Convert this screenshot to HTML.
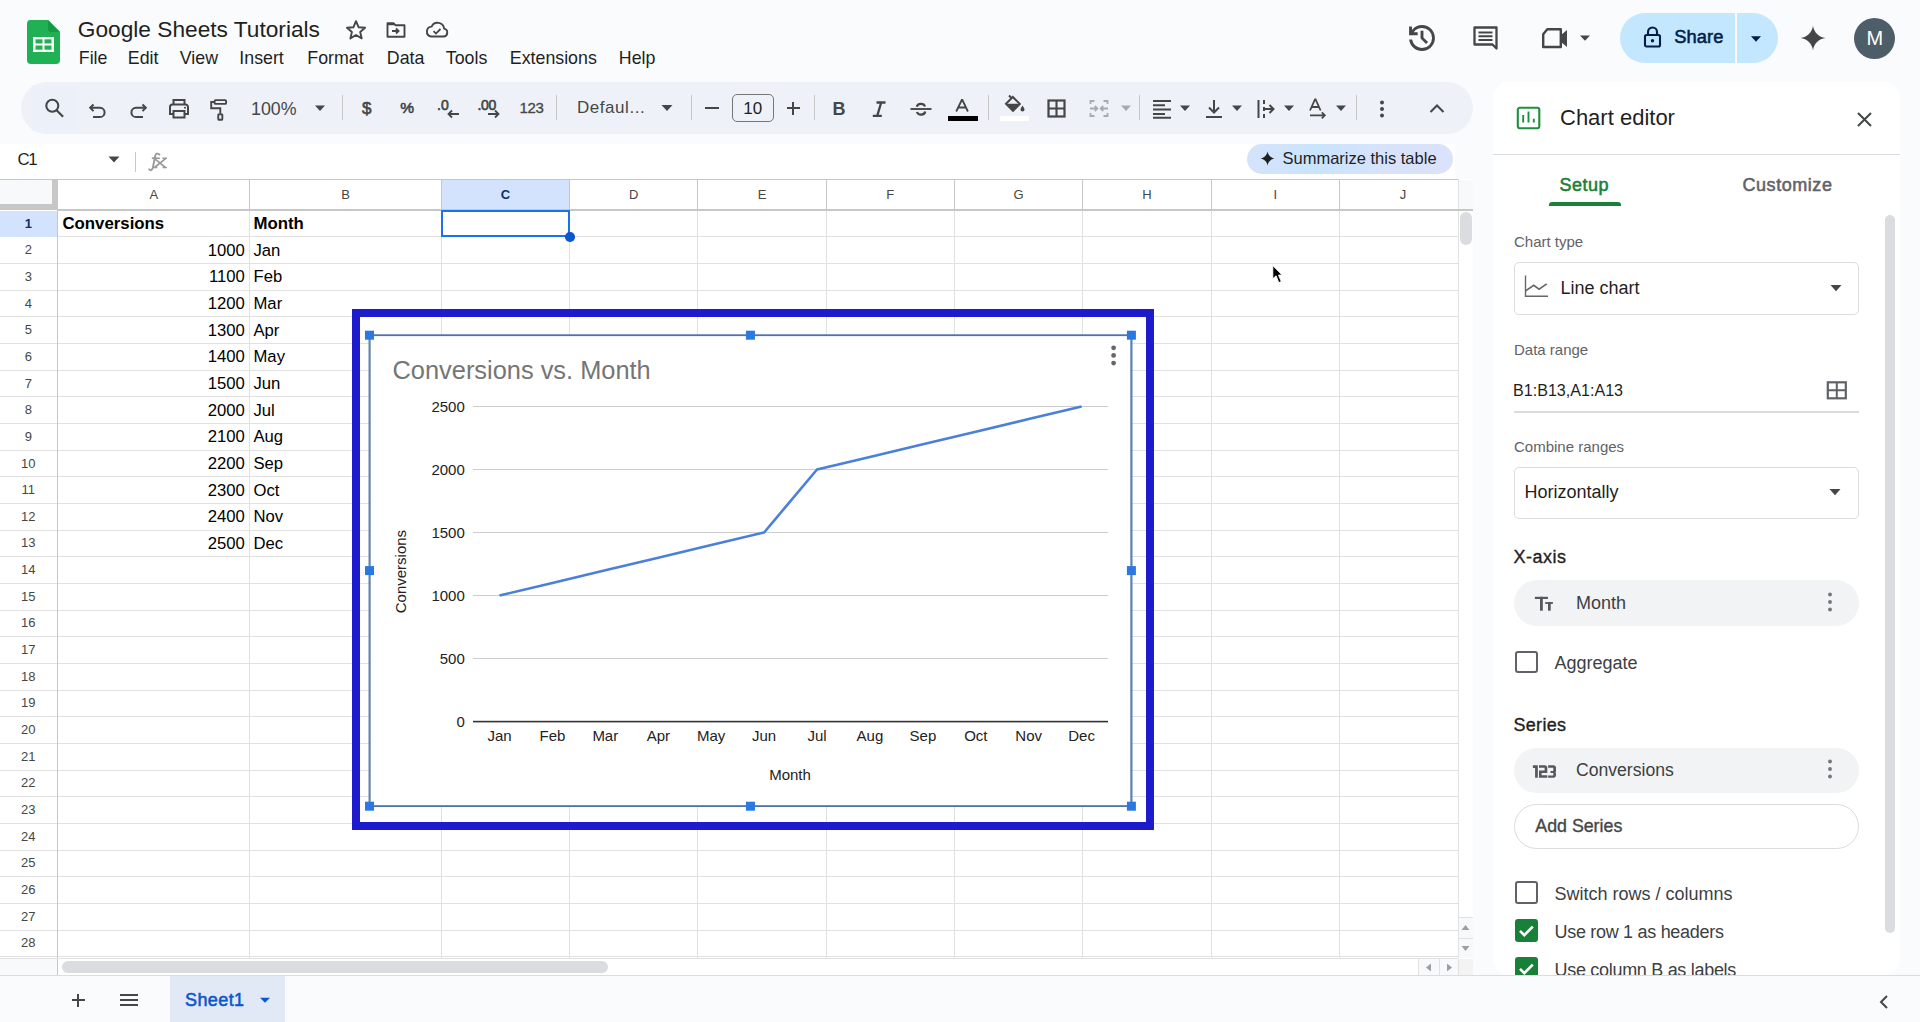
<!DOCTYPE html><html><head><meta charset="utf-8"><style>
html,body{margin:0;padding:0;}
body{width:1920px;height:1022px;overflow:hidden;position:relative;background:#f9fbfd;font-family:"Liberation Sans", sans-serif;}
.t{position:absolute;white-space:nowrap;line-height:1;}
.r{position:absolute;}
</style></head><body>
<svg class="r" style="left:27px;top:20px;" width="33" height="44" viewBox="0 0 33 44">
<path d="M3 0H21L33 12V40Q33 44 29 44H4Q0 44 0 40V4Q0 0 3 0Z" fill="#1fb153"/>
<path d="M21 0L33 12H24Q21 12 21 9Z" fill="#159a44"/>
<rect x="6" y="17" width="21" height="15" fill="#fff"/>
<rect x="8.5" y="19.3" width="7" height="4.2" fill="#1fb153"/>
<rect x="17.5" y="19.3" width="7" height="4.2" fill="#1fb153"/>
<rect x="8.5" y="25.5" width="7" height="4.2" fill="#1fb153"/>
<rect x="17.5" y="25.5" width="7" height="4.2" fill="#1fb153"/>
</svg>
<div class="t" style="left:77.80px;top:17.78px;font-size:22.7px;color:#1f1f1f;">Google Sheets Tutorials</div>
<svg class="r" style="left:344px;top:18px;" width="24" height="24" viewBox="0 0 24 24"><path d="M12 3.2l2.6 6 6.5.5-4.9 4.3 1.5 6.4L12 17l-5.6 3.4 1.5-6.4L3 9.7l6.5-.5z" fill="none" stroke="#444746" stroke-width="1.9" stroke-linejoin="round"/></svg>
<svg class="r" style="left:384px;top:18px;" width="24" height="24" viewBox="0 0 24 24"><path d="M3.5 5.2h6l2 2h9v11.6h-17z" fill="none" stroke="#444746" stroke-width="1.9" stroke-linejoin="round"/><path d="M3.5 5.2h6l2 2H3.5z" fill="#444746"/><path d="M8 13h6.5M12 10.5l2.6 2.5L12 15.5" fill="none" stroke="#444746" stroke-width="1.8"/></svg>
<svg class="r" style="left:424px;top:18px;" width="26" height="24" viewBox="0 0 26 24"><path d="M7 18.5h12.5a4 4 0 0 0 .6-7.9A6.6 6.6 0 0 0 7.6 8.6 5 5 0 0 0 7 18.5z" fill="none" stroke="#444746" stroke-width="1.9" stroke-linejoin="round"/><path d="M9.5 13.2l2.4 2.4 4.6-4.6" fill="none" stroke="#444746" stroke-width="1.8"/></svg>
<div class="t" style="left:78.80px;top:49.73px;font-size:17.8px;color:#1f1f1f;">File</div>
<div class="t" style="left:127.80px;top:49.73px;font-size:17.8px;color:#1f1f1f;">Edit</div>
<div class="t" style="left:179.80px;top:49.73px;font-size:17.8px;color:#1f1f1f;">View</div>
<div class="t" style="left:239.30px;top:49.73px;font-size:17.8px;color:#1f1f1f;">Insert</div>
<div class="t" style="left:307.30px;top:49.73px;font-size:17.8px;color:#1f1f1f;">Format</div>
<div class="t" style="left:386.80px;top:49.73px;font-size:17.8px;color:#1f1f1f;">Data</div>
<div class="t" style="left:445.80px;top:49.73px;font-size:17.8px;color:#1f1f1f;">Tools</div>
<div class="t" style="left:509.80px;top:49.73px;font-size:17.8px;color:#1f1f1f;">Extensions</div>
<div class="t" style="left:618.80px;top:49.73px;font-size:17.8px;color:#1f1f1f;">Help</div>
<svg class="r" style="left:1408px;top:24px;" width="28" height="28" viewBox="90 -870 780 780"><path d="M480-120q-138 0-240.5-91.5T122-440h82q14 104 92.5 172T480-200q117 0 198.5-81.5T760-480q0-117-81.5-198.5T480-760q-69 0-129 32t-101 88h110v80H120v-240h80v94q51-64 124.5-99T480-840q75 0 140.5 28.5t114 77q48.5 48.5 77 114T840-480q0 75-28.5 140.5t-77 114q-48.5 48.5-114 77T480-120Zm112-192L440-464v-216h80v184l128 128-56 56Z" fill="#444746"/></svg>
<svg class="r" style="left:1472px;top:25px;" width="28" height="27" viewBox="0 0 28 27"><path d="M2.5 2.5h22v21l-4-4h-18z" fill="none" stroke="#444746" stroke-width="2.3" stroke-linejoin="round"/><path d="M6.5 7.5h14M6.5 11.2h14M6.5 14.9h14" stroke="#444746" stroke-width="2"/></svg>
<svg class="r" style="left:1540px;top:27px;" width="30" height="24" viewBox="0 0 30 24"><path d="M7.3 2.2h13.5v17.8H3.2V7.2z" fill="none" stroke="#444746" stroke-width="2.4" stroke-linejoin="round"/><path d="M20.5 8.5l6.5-5.5v17l-6.5-5.5z" fill="#444746"/></svg>
<svg class="r" style="left:1579px;top:34px;" width="12" height="8" viewBox="0 0 12 8"><path d="M1 1.5h10L6 6.8z" fill="#444746"/></svg>
<div class="r" style="left:1620px;top:13px;width:158px;height:50px;background:#c2e7ff;border-radius:25px;"></div>
<div class="r" style="left:1735px;top:13px;width:2px;height:50px;background:#f9fbfd;"></div>
<svg class="r" style="left:1643px;top:26px;" width="19" height="22" viewBox="0 0 19 22"><rect x="2" y="9" width="15" height="11.5" rx="1.5" fill="none" stroke="#041e49" stroke-width="2.1"/><path d="M5 9V6a4.5 4.5 0 0 1 9 0v3" fill="none" stroke="#041e49" stroke-width="2.1"/><circle cx="9.5" cy="14.8" r="1.7" fill="#041e49"/></svg>
<div class="t" style="left:1674.30px;top:28.31px;font-size:18.3px;color:#041e49;letter-spacing:0.1px;-webkit-text-stroke-width:0.55px;">Share</div>
<svg class="r" style="left:1750px;top:35px;" width="12" height="8" viewBox="0 0 12 8"><path d="M1 1.2h10L6 6.8z" fill="#041e49"/></svg>
<svg class="r" style="left:1800px;top:25px;" width="26" height="26" viewBox="0 0 26 26"><path d="M13 0.5C13.6 7 19 12.4 25.5 13C19 13.6 13.6 19 13 25.5C12.4 19 7 13.6 0.5 13C7 12.4 12.4 7 13 0.5Z" fill="#444746"/></svg>
<div class="r" style="left:1854px;top:18px;width:41px;height:41px;background:#4e5e69;border-radius:50%;"></div>
<div class="t" style="left:1854.80px;width:40px;text-align:center;top:27.87px;font-size:20px;color:#ffffff;">M</div>
<div class="r" style="left:21px;top:82px;width:1452px;height:52px;background:#eef2f8;border-radius:26px;"></div>
<div class="r" style="left:31px;top:85px;width:47px;height:46px;background:#ebf0f9;border-radius:4px;"></div>
<svg class="r" style="left:43px;top:97px;" width="24" height="24" viewBox="0 0 24 24"><circle cx="9.3" cy="8.8" r="6" fill="none" stroke="#444746" stroke-width="2.1"/><path d="M13.6 13.2l6.5 6.5" stroke="#444746" stroke-width="2.2"/></svg>
<svg class="r" style="left:88px;top:100px;" width="20" height="20" viewBox="0 0 20 20"><path d="M5.5 4.5L2.2 7.8l3.3 3.3" fill="none" stroke="#444746" stroke-width="2"/><path d="M2.5 7.8h9.5a4.6 4.6 0 0 1 0 9.2H5" fill="none" stroke="#444746" stroke-width="2"/></svg>
<svg class="r" style="left:128px;top:100px;" width="20" height="20" viewBox="0 0 20 20"><path d="M14.5 4.5l3.3 3.3-3.3 3.3" fill="none" stroke="#444746" stroke-width="2"/><path d="M17.5 7.8H8a4.6 4.6 0 0 0 0 9.2h7" fill="none" stroke="#444746" stroke-width="2"/></svg>
<svg class="r" style="left:167px;top:98px;" width="24" height="22" viewBox="0 0 24 22"><path d="M6.5 6V2h11v4" fill="none" stroke="#444746" stroke-width="2"/><path d="M6 16H3V9a2.5 2.5 0 0 1 2.5-2.5h13A2.5 2.5 0 0 1 21 9v7h-3" fill="none" stroke="#444746" stroke-width="2"/><rect x="6.5" y="13" width="11" height="6.5" fill="none" stroke="#444746" stroke-width="2"/><circle cx="18" cy="9.8" r="1" fill="#444746"/></svg>
<svg class="r" style="left:208px;top:98px;" width="22" height="24" viewBox="0 0 22 24"><rect x="6.6" y="2.1" width="11.5" height="3.8" rx="1" fill="none" stroke="#444746" stroke-width="1.9"/><path d="M6.6 4H3.2V10.3H12.3V15.3" fill="none" stroke="#444746" stroke-width="1.9"/><rect x="10.25" y="16.2" width="4.1" height="5.6" rx=".9" fill="none" stroke="#444746" stroke-width="1.9"/></svg>
<div class="t" style="left:251.00px;top:100.83px;font-size:17.8px;color:#444746;">100%</div>
<svg class="r" style="left:314px;top:104px;" width="12" height="8" viewBox="0 0 12 8"><path d="M1 1.5h10L6 7z" fill="#444746"/></svg>
<div class="r" style="left:342px;top:95px;width:1px;height:25px;background:#c7c7c7;"></div>
<div class="t" style="left:362.00px;top:100.41px;font-size:17px;color:#444746;-webkit-text-stroke-width:0.6px;">$</div>
<div class="t" style="left:400.30px;top:100.18px;font-size:15.5px;color:#444746;-webkit-text-stroke-width:0.6px;">%</div>
<div class="t" style="left:437.00px;top:98.45px;font-size:14px;color:#444746;-webkit-text-stroke-width:0.6px;">.0</div>
<svg class="r" style="left:446px;top:109px;" width="14" height="10" viewBox="0 0 14 10"><path d="M13 5H2.5M6 1.5L2.5 5 6 8.5" fill="none" stroke="#444746" stroke-width="1.8"/></svg>
<div class="t" style="left:477.50px;top:98.45px;font-size:14px;color:#444746;letter-spacing:-0.4px;-webkit-text-stroke-width:0.6px;">.00</div>
<svg class="r" style="left:487px;top:109px;" width="14" height="10" viewBox="0 0 14 10"><path d="M1 5h10.5M8 1.5L11.5 5 8 8.5" fill="none" stroke="#444746" stroke-width="1.8"/></svg>
<div class="t" style="left:519.50px;top:100.20px;font-size:15px;color:#444746;letter-spacing:-0.4px;-webkit-text-stroke-width:0.3px;">123</div>
<div class="r" style="left:556px;top:95px;width:1px;height:25px;background:#c7c7c7;"></div>
<div class="t" style="left:577.00px;top:99.31px;font-size:17px;color:#444746;letter-spacing:0.55px;">Defaul...</div>
<svg class="r" style="left:660px;top:103px;" width="14" height="9" viewBox="0 0 14 9"><path d="M1.5 2h11L7 8z" fill="#444746"/></svg>
<div class="r" style="left:691px;top:95px;width:1px;height:25px;background:#c7c7c7;"></div>
<div class="r" style="left:705px;top:107px;width:13.5px;height:1.8px;background:#444746;"></div>
<div class="r" style="left:731.5px;top:93.5px;width:42.5px;height:28.5px;background:transparent;border:1.3px solid #747775;border-radius:5px;box-sizing:border-box;"></div>
<div class="t" style="left:732.70px;width:40px;text-align:center;top:99.61px;font-size:17px;color:#1f1f1f;">10</div>
<div class="r" style="left:786.5px;top:107.3px;width:13px;height:1.9px;background:#444746;"></div>
<div class="r" style="left:792.2px;top:101.8px;width:1.9px;height:13px;background:#444746;"></div>
<div class="r" style="left:814px;top:95px;width:1px;height:25px;background:#c7c7c7;"></div>
<div class="t" style="left:832.50px;top:100.16px;font-size:18px;color:#444746;font-weight:bold;">B</div>
<svg class="r" style="left:870px;top:100px;" width="18" height="18" viewBox="0 0 18 18"><path d="M6.5 2.5h9M2.8 15.8h9M11.2 2.5L7.2 15.8" fill="none" stroke="#444746" stroke-width="2.3"/></svg>
<svg class="r" style="left:909px;top:100px;" width="24" height="18" viewBox="0 0 24 18"><path d="M1.5 9h21" stroke="#444746" stroke-width="1.9"/><path d="M16 6.5a4.2 3.6 0 0 0-8.2 .3M8 12a4.2 3.6 0 0 0 8.2 -.5" fill="none" stroke="#444746" stroke-width="2.2"/></svg>
<svg class="r" style="left:955px;top:99px;" width="14" height="13" viewBox="0 0 14 13"><path d="M1.2 12.5L6.8 1h.6l5.5 11.5M3.5 8.5h7" fill="none" stroke="#444746" stroke-width="1.8"/></svg>
<div class="r" style="left:948px;top:115.5px;width:29.5px;height:5px;background:#000000;"></div>
<div class="r" style="left:988px;top:95px;width:1px;height:25px;background:#c7c7c7;"></div>
<svg class="r" style="left:1003px;top:94px;" width="22" height="19" viewBox="0 0 22 19"><path d="M6 1.5l2 2M3 9.8L9.8 3l7 7-6.8 6.8z" fill="none" stroke="#444746" stroke-width="2"/><path d="M3 9.8h13.8L10 16.8z" fill="#444746"/><path d="M19.5 11.5q2 2.8 2 4a2 2 0 0 1-4 0q0-1.2 2-4z" fill="#444746"/></svg>
<div class="r" style="left:1000px;top:115.5px;width:29px;height:5px;background:#ffffff;"></div>
<svg class="r" style="left:1046px;top:98px;" width="22" height="22" viewBox="0 0 22 22"><rect x="2.5" y="2.5" width="16" height="16" fill="none" stroke="#444746" stroke-width="2.2"/><path d="M10.5 2.5v16M2.5 10.5h16" stroke="#444746" stroke-width="2.1"/></svg>
<svg class="r" style="left:1088px;top:98px;" width="24" height="22" viewBox="0 0 24 22"><path d="M2.5 6V3h4M2.5 15v3h4M19.5 6V3h-4M19.5 15v3h-4M2 10.5h7M6.8 8l2.5 2.5-2.5 2.5M20 10.5h-7M15.2 8l-2.5 2.5 2.5 2.5" fill="none" stroke="#a8abad" stroke-width="1.8"/></svg>
<svg class="r" style="left:1120px;top:104px;" width="12" height="8" viewBox="0 0 12 8"><path d="M1 1.5h10L6 7z" fill="#a8abad"/></svg>
<div class="r" style="left:1139px;top:95px;width:1px;height:25px;background:#c7c7c7;"></div>
<svg class="r" style="left:1151px;top:98px;" width="22" height="22" viewBox="0 0 22 22"><path d="M2 3h18M2 7.3h12M2 11.6h18M2 15.9h12M2 19.8h18" stroke="#444746" stroke-width="2"/></svg>
<svg class="r" style="left:1179px;top:104px;" width="12" height="8" viewBox="0 0 12 8"><path d="M1 1.5h10L6 7z" fill="#444746"/></svg>
<svg class="r" style="left:1204px;top:98px;" width="20" height="22" viewBox="0 0 20 22"><path d="M10 2v12M5 9.5l5 5 5-5" fill="none" stroke="#444746" stroke-width="2"/><path d="M2 19h16" stroke="#444746" stroke-width="2"/></svg>
<svg class="r" style="left:1231px;top:104px;" width="12" height="8" viewBox="0 0 12 8"><path d="M1 1.5h10L6 7z" fill="#444746"/></svg>
<svg class="r" style="left:1256px;top:98px;" width="20" height="22" viewBox="0 0 20 22"><path d="M2.5 2v18M8 2v4M8 9v4M8 16v4M8 11h9.5M13.5 7l4 4-4 4" fill="none" stroke="#444746" stroke-width="2"/></svg>
<svg class="r" style="left:1283px;top:104px;" width="12" height="8" viewBox="0 0 12 8"><path d="M1 1.5h10L6 7z" fill="#444746"/></svg>
<svg class="r" style="left:1308px;top:98px;" width="22" height="22" viewBox="0 0 22 22"><path d="M2 12.5L7 1.5h.6l5 11M3.6 9h7.8" fill="none" stroke="#444746" stroke-width="1.8"/><path d="M2 17.3h14.5M13.8 14.3l3 3-3 3" fill="none" stroke="#444746" stroke-width="1.8"/></svg>
<svg class="r" style="left:1335px;top:104px;" width="12" height="8" viewBox="0 0 12 8"><path d="M1 1.5h10L6 7z" fill="#444746"/></svg>
<div class="r" style="left:1356px;top:95px;width:1px;height:25px;background:#c7c7c7;"></div>
<svg class="r" style="left:1376px;top:99px;" width="12" height="20" viewBox="0 0 12 20"><circle cx="6" cy="3.5" r="2" fill="#444746"/><circle cx="6" cy="10" r="2" fill="#444746"/><circle cx="6" cy="16.5" r="2" fill="#444746"/></svg>
<svg class="r" style="left:1428px;top:101px;" width="18" height="14" viewBox="0 0 18 14"><path d="M2.5 11l6.5-6.5 6.5 6.5" fill="none" stroke="#444746" stroke-width="2.1"/></svg>
<div class="r" style="left:0px;top:143.5px;width:1455px;height:36px;background:#ffffff;"></div>
<div class="t" style="left:17.50px;top:152.08px;font-size:16.8px;color:#1f1f1f;letter-spacing:-1.3px;">C1</div>
<svg class="r" style="left:107px;top:155px;" width="14" height="9" viewBox="0 0 14 9"><path d="M1.5 1.5h11L7 7.5z" fill="#444746"/></svg>
<div class="r" style="left:135px;top:152px;width:1px;height:20px;background:#c7c7c7;"></div>
<svg class="r" style="left:145px;top:150px;" width="26" height="24" viewBox="0 0 26 24"><path d="M4.2 19.2Q6.2 22 7.9 17.5L10.2 5.8Q11.2 2.2 14.4 4.6" fill="none" stroke="#9a9a9a" stroke-width="1.9" stroke-linecap="round"/><path d="M6.8 8.3H15" stroke="#9a9a9a" stroke-width="1.5"/><path d="M9.5 8.6L20.5 17.5M20.5 8.6L9.5 17.5" stroke="#9a9a9a" stroke-width="1.7"/><path d="M7.3 8.3H12.3M17.5 8.3H22M7.3 17.6H12.3M17.5 17.6H22" stroke="#9a9a9a" stroke-width="1.4"/></svg>
<div class="r" style="left:1247px;top:144px;width:206px;height:30px;background:linear-gradient(90deg,#d5e3fc 0%,#c9e4fd 35%,#d9e2fb 70%,#dbe2fb 100%);border-radius:15px;"></div>
<svg class="r" style="left:1260px;top:151px;" width="15" height="15" viewBox="0 0 15 15"><path d="M7.5 0.3C7.8 4 11 7.2 14.7 7.5C11 7.8 7.8 11 7.5 14.7C7.2 11 4 7.8 0.3 7.5C4 7.2 7.2 4 7.5 0.3Z" fill="#1f1f1f"/></svg>
<div class="t" style="left:1282.50px;top:150.03px;font-size:16.5px;color:#1f1f1f;">Summarize this table</div>
<div class="r" style="left:0px;top:179px;width:1473px;height:780px;background:#ffffff;"></div>
<svg class="r" style="left:0px;top:0px;" width="1473" height="975" viewBox="0 0 1473 975"><rect x="0" y="236" width="1458" height="1" fill="#e1e1e1"/><rect x="0" y="263" width="1458" height="1" fill="#e1e1e1"/><rect x="0" y="290" width="1458" height="1" fill="#e1e1e1"/><rect x="0" y="316" width="1458" height="1" fill="#e1e1e1"/><rect x="0" y="343" width="1458" height="1" fill="#e1e1e1"/><rect x="0" y="370" width="1458" height="1" fill="#e1e1e1"/><rect x="0" y="396" width="1458" height="1" fill="#e1e1e1"/><rect x="0" y="423" width="1458" height="1" fill="#e1e1e1"/><rect x="0" y="450" width="1458" height="1" fill="#e1e1e1"/><rect x="0" y="476" width="1458" height="1" fill="#e1e1e1"/><rect x="0" y="503" width="1458" height="1" fill="#e1e1e1"/><rect x="0" y="530" width="1458" height="1" fill="#e1e1e1"/><rect x="0" y="556" width="1458" height="1" fill="#e1e1e1"/><rect x="0" y="583" width="1458" height="1" fill="#e1e1e1"/><rect x="0" y="610" width="1458" height="1" fill="#e1e1e1"/><rect x="0" y="636" width="1458" height="1" fill="#e1e1e1"/><rect x="0" y="663" width="1458" height="1" fill="#e1e1e1"/><rect x="0" y="690" width="1458" height="1" fill="#e1e1e1"/><rect x="0" y="716" width="1458" height="1" fill="#e1e1e1"/><rect x="0" y="743" width="1458" height="1" fill="#e1e1e1"/><rect x="0" y="770" width="1458" height="1" fill="#e1e1e1"/><rect x="0" y="796" width="1458" height="1" fill="#e1e1e1"/><rect x="0" y="823" width="1458" height="1" fill="#e1e1e1"/><rect x="0" y="850" width="1458" height="1" fill="#e1e1e1"/><rect x="0" y="876" width="1458" height="1" fill="#e1e1e1"/><rect x="0" y="903" width="1458" height="1" fill="#e1e1e1"/><rect x="0" y="930" width="1458" height="1" fill="#e1e1e1"/><rect x="0" y="956" width="1458" height="1" fill="#e1e1e1"/><rect x="249" y="179" width="1" height="780" fill="#e1e1e1"/><rect x="441" y="179" width="1" height="780" fill="#e1e1e1"/><rect x="569" y="179" width="1" height="780" fill="#e1e1e1"/><rect x="697" y="179" width="1" height="780" fill="#e1e1e1"/><rect x="826" y="179" width="1" height="780" fill="#e1e1e1"/><rect x="954" y="179" width="1" height="780" fill="#e1e1e1"/><rect x="1082" y="179" width="1" height="780" fill="#e1e1e1"/><rect x="1211" y="179" width="1" height="780" fill="#e1e1e1"/><rect x="1339" y="179" width="1" height="780" fill="#e1e1e1"/><rect x="1467" y="179" width="1" height="780" fill="#e1e1e1"/></svg>
<div class="r" style="left:0px;top:179px;width:1473px;height:1px;background:#c7c7c7;"></div>
<div class="r" style="left:58px;top:209px;width:1415px;height:2px;background:#c7c7c7;"></div>
<div class="r" style="left:249px;top:179px;width:1px;height:31px;background:#c7c7c7;"></div>
<div class="r" style="left:441px;top:179px;width:1px;height:31px;background:#c7c7c7;"></div>
<div class="r" style="left:569px;top:179px;width:1px;height:31px;background:#c7c7c7;"></div>
<div class="r" style="left:697px;top:179px;width:1px;height:31px;background:#c7c7c7;"></div>
<div class="r" style="left:826px;top:179px;width:1px;height:31px;background:#c7c7c7;"></div>
<div class="r" style="left:954px;top:179px;width:1px;height:31px;background:#c7c7c7;"></div>
<div class="r" style="left:1082px;top:179px;width:1px;height:31px;background:#c7c7c7;"></div>
<div class="r" style="left:1211px;top:179px;width:1px;height:31px;background:#c7c7c7;"></div>
<div class="r" style="left:1339px;top:179px;width:1px;height:31px;background:#c7c7c7;"></div>
<div class="r" style="left:1467px;top:179px;width:1px;height:31px;background:#c7c7c7;"></div>
<div class="r" style="left:57px;top:210px;width:1px;height:749px;background:#c7c7c7;"></div>
<div class="r" style="left:442px;top:180px;width:127px;height:29px;background:#d3e3fd;"></div>
<div class="r" style="left:0px;top:211px;width:57px;height:25.5px;background:#d3e3fd;"></div>
<div class="r" style="left:0px;top:180px;width:52px;height:24px;background:#f8f9fa;"></div>
<div class="r" style="left:52px;top:179px;width:6px;height:31px;background:#c7c7c7;"></div>
<div class="r" style="left:0px;top:204px;width:58px;height:6px;background:#c7c7c7;"></div>
<div class="t" style="left:123.85px;width:60px;text-align:center;top:187.80px;font-size:13px;color:#444746;">A</div>
<div class="t" style="left:315.50px;width:60px;text-align:center;top:187.80px;font-size:13px;color:#444746;">B</div>
<div class="t" style="left:475.45px;width:60px;text-align:center;top:187.80px;font-size:13px;color:#0f2f66;font-weight:bold;">C</div>
<div class="t" style="left:603.75px;width:60px;text-align:center;top:187.80px;font-size:13px;color:#444746;">D</div>
<div class="t" style="left:732.05px;width:60px;text-align:center;top:187.80px;font-size:13px;color:#444746;">E</div>
<div class="t" style="left:860.35px;width:60px;text-align:center;top:187.80px;font-size:13px;color:#444746;">F</div>
<div class="t" style="left:988.65px;width:60px;text-align:center;top:187.80px;font-size:13px;color:#444746;">G</div>
<div class="t" style="left:1116.95px;width:60px;text-align:center;top:187.80px;font-size:13px;color:#444746;">H</div>
<div class="t" style="left:1245.25px;width:60px;text-align:center;top:187.80px;font-size:13px;color:#444746;">I</div>
<div class="t" style="left:1373.00px;width:60px;text-align:center;top:187.80px;font-size:13px;color:#444746;">J</div>
<div class="t" style="left:3.30px;width:50px;text-align:center;top:216.56px;font-size:13px;color:#0f2f66;font-weight:bold;">1</div>
<div class="t" style="left:3.30px;width:50px;text-align:center;top:243.22px;font-size:13px;color:#444746;">2</div>
<div class="t" style="left:3.30px;width:50px;text-align:center;top:269.88px;font-size:13px;color:#444746;">3</div>
<div class="t" style="left:3.30px;width:50px;text-align:center;top:296.54px;font-size:13px;color:#444746;">4</div>
<div class="t" style="left:3.30px;width:50px;text-align:center;top:323.20px;font-size:13px;color:#444746;">5</div>
<div class="t" style="left:3.30px;width:50px;text-align:center;top:349.86px;font-size:13px;color:#444746;">6</div>
<div class="t" style="left:3.30px;width:50px;text-align:center;top:376.52px;font-size:13px;color:#444746;">7</div>
<div class="t" style="left:3.30px;width:50px;text-align:center;top:403.18px;font-size:13px;color:#444746;">8</div>
<div class="t" style="left:3.30px;width:50px;text-align:center;top:429.84px;font-size:13px;color:#444746;">9</div>
<div class="t" style="left:3.30px;width:50px;text-align:center;top:456.50px;font-size:13px;color:#444746;">10</div>
<div class="t" style="left:3.30px;width:50px;text-align:center;top:483.16px;font-size:13px;color:#444746;">11</div>
<div class="t" style="left:3.30px;width:50px;text-align:center;top:509.82px;font-size:13px;color:#444746;">12</div>
<div class="t" style="left:3.30px;width:50px;text-align:center;top:536.48px;font-size:13px;color:#444746;">13</div>
<div class="t" style="left:3.30px;width:50px;text-align:center;top:563.14px;font-size:13px;color:#444746;">14</div>
<div class="t" style="left:3.30px;width:50px;text-align:center;top:589.80px;font-size:13px;color:#444746;">15</div>
<div class="t" style="left:3.30px;width:50px;text-align:center;top:616.46px;font-size:13px;color:#444746;">16</div>
<div class="t" style="left:3.30px;width:50px;text-align:center;top:643.12px;font-size:13px;color:#444746;">17</div>
<div class="t" style="left:3.30px;width:50px;text-align:center;top:669.78px;font-size:13px;color:#444746;">18</div>
<div class="t" style="left:3.30px;width:50px;text-align:center;top:696.44px;font-size:13px;color:#444746;">19</div>
<div class="t" style="left:3.30px;width:50px;text-align:center;top:723.10px;font-size:13px;color:#444746;">20</div>
<div class="t" style="left:3.30px;width:50px;text-align:center;top:749.76px;font-size:13px;color:#444746;">21</div>
<div class="t" style="left:3.30px;width:50px;text-align:center;top:776.42px;font-size:13px;color:#444746;">22</div>
<div class="t" style="left:3.30px;width:50px;text-align:center;top:803.08px;font-size:13px;color:#444746;">23</div>
<div class="t" style="left:3.30px;width:50px;text-align:center;top:829.74px;font-size:13px;color:#444746;">24</div>
<div class="t" style="left:3.30px;width:50px;text-align:center;top:856.40px;font-size:13px;color:#444746;">25</div>
<div class="t" style="left:3.30px;width:50px;text-align:center;top:883.06px;font-size:13px;color:#444746;">26</div>
<div class="t" style="left:3.30px;width:50px;text-align:center;top:909.72px;font-size:13px;color:#444746;">27</div>
<div class="t" style="left:3.30px;width:50px;text-align:center;top:936.38px;font-size:13px;color:#444746;">28</div>
<div class="t" style="left:62.50px;top:216.28px;font-size:16.8px;color:#000000;font-weight:bold;">Conversions</div>
<div class="t" style="left:253.50px;top:216.28px;font-size:16.8px;color:#000000;font-weight:bold;">Month</div>
<div class="t" style="left:124.80px;width:120px;text-align:right;top:242.61px;font-size:16.67px;color:#000000;">1000</div>
<div class="t" style="left:253.50px;top:242.61px;font-size:16.67px;color:#000000;">Jan</div>
<div class="t" style="left:124.80px;width:120px;text-align:right;top:269.27px;font-size:16.67px;color:#000000;">1100</div>
<div class="t" style="left:253.50px;top:269.27px;font-size:16.67px;color:#000000;">Feb</div>
<div class="t" style="left:124.80px;width:120px;text-align:right;top:295.93px;font-size:16.67px;color:#000000;">1200</div>
<div class="t" style="left:253.50px;top:295.93px;font-size:16.67px;color:#000000;">Mar</div>
<div class="t" style="left:124.80px;width:120px;text-align:right;top:322.59px;font-size:16.67px;color:#000000;">1300</div>
<div class="t" style="left:253.50px;top:322.59px;font-size:16.67px;color:#000000;">Apr</div>
<div class="t" style="left:124.80px;width:120px;text-align:right;top:349.25px;font-size:16.67px;color:#000000;">1400</div>
<div class="t" style="left:253.50px;top:349.25px;font-size:16.67px;color:#000000;">May</div>
<div class="t" style="left:124.80px;width:120px;text-align:right;top:375.91px;font-size:16.67px;color:#000000;">1500</div>
<div class="t" style="left:253.50px;top:375.91px;font-size:16.67px;color:#000000;">Jun</div>
<div class="t" style="left:124.80px;width:120px;text-align:right;top:402.57px;font-size:16.67px;color:#000000;">2000</div>
<div class="t" style="left:253.50px;top:402.57px;font-size:16.67px;color:#000000;">Jul</div>
<div class="t" style="left:124.80px;width:120px;text-align:right;top:429.23px;font-size:16.67px;color:#000000;">2100</div>
<div class="t" style="left:253.50px;top:429.23px;font-size:16.67px;color:#000000;">Aug</div>
<div class="t" style="left:124.80px;width:120px;text-align:right;top:455.89px;font-size:16.67px;color:#000000;">2200</div>
<div class="t" style="left:253.50px;top:455.89px;font-size:16.67px;color:#000000;">Sep</div>
<div class="t" style="left:124.80px;width:120px;text-align:right;top:482.55px;font-size:16.67px;color:#000000;">2300</div>
<div class="t" style="left:253.50px;top:482.55px;font-size:16.67px;color:#000000;">Oct</div>
<div class="t" style="left:124.80px;width:120px;text-align:right;top:509.21px;font-size:16.67px;color:#000000;">2400</div>
<div class="t" style="left:253.50px;top:509.21px;font-size:16.67px;color:#000000;">Nov</div>
<div class="t" style="left:124.80px;width:120px;text-align:right;top:535.87px;font-size:16.67px;color:#000000;">2500</div>
<div class="t" style="left:253.50px;top:535.87px;font-size:16.67px;color:#000000;">Dec</div>
<div class="r" style="left:441px;top:210px;width:129px;height:27px;background:transparent;border:2px solid #1a73e8;box-sizing:border-box;"></div>
<div class="r" style="left:565.3px;top:232.2px;width:9.6px;height:9.6px;background:#0b57d0;border-radius:50%;"></div>
<div class="r" style="left:1458px;top:179px;width:15px;height:780px;background:#ffffff;"></div>
<div class="r" style="left:1458px;top:179px;width:1px;height:780px;background:#e1e1e1;"></div>
<div class="r" style="left:1459px;top:180px;width:14px;height:29px;background:#f8f9fa;"></div>
<div class="r" style="left:1458px;top:209px;width:15px;height:2px;background:#c7c7c7;"></div>
<div class="r" style="left:1460px;top:212px;width:12px;height:33px;background:#dadce0;border-radius:6px;"></div>
<div class="r" style="left:1459px;top:918px;width:14px;height:41px;background:#f8f9fa;"></div>
<div class="r" style="left:1459px;top:917px;width:14px;height:1px;background:#e1e1e1;"></div>
<div class="r" style="left:1459px;top:938px;width:14px;height:1px;background:#e1e1e1;"></div>
<svg class="r" style="left:1461px;top:924px;" width="9" height="7" viewBox="0 0 9 7"><path d="M0.5 6h8L4.5 1z" fill="#9aa0a6"/></svg>
<svg class="r" style="left:1461px;top:945px;" width="9" height="7" viewBox="0 0 9 7"><path d="M0.5 1h8L4.5 6z" fill="#9aa0a6"/></svg>
<div class="r" style="left:0px;top:958px;width:1473px;height:17px;background:#ffffff;"></div>
<div class="r" style="left:0px;top:958px;width:1458px;height:1px;background:#e1e1e1;"></div>
<div class="r" style="left:0px;top:959px;width:57px;height:16px;background:#f8f9fa;"></div>
<div class="r" style="left:57px;top:959px;width:1px;height:16px;background:#c7c7c7;"></div>
<div class="r" style="left:61.5px;top:961px;width:546px;height:11.5px;background:#dadce0;border-radius:6px;"></div>
<div class="r" style="left:1418px;top:959px;width:41px;height:16px;background:#f8f9fa;"></div>
<div class="r" style="left:1418px;top:959px;width:1px;height:16px;background:#e1e1e1;"></div>
<div class="r" style="left:1439px;top:959px;width:1px;height:16px;background:#e1e1e1;"></div>
<div class="r" style="left:1459px;top:959px;width:14px;height:16px;background:#f3f3f3;"></div>
<div class="r" style="left:1458px;top:959px;width:1px;height:16px;background:#e1e1e1;"></div>
<svg class="r" style="left:1425px;top:963px;" width="7" height="9" viewBox="0 0 7 9"><path d="M6 0.5v8L1 4.5z" fill="#9aa0a6"/></svg>
<svg class="r" style="left:1446px;top:963px;" width="7" height="9" viewBox="0 0 7 9"><path d="M1 0.5v8L6 4.5z" fill="#9aa0a6"/></svg>
<div class="r" style="left:0px;top:975px;width:1920px;height:47px;background:#f9fbfd;"></div>
<div class="r" style="left:0px;top:975px;width:1920px;height:1px;background:#dadce0;"></div>
<div class="r" style="left:71.5px;top:998.9px;width:13px;height:2px;background:#444746;"></div>
<div class="r" style="left:77px;top:993.5px;width:2px;height:13px;background:#444746;"></div>
<div class="r" style="left:119.5px;top:994px;width:18.5px;height:2px;background:#444746;"></div>
<div class="r" style="left:119.5px;top:999px;width:18.5px;height:2px;background:#444746;"></div>
<div class="r" style="left:119.5px;top:1004px;width:18.5px;height:2px;background:#444746;"></div>
<div class="r" style="left:170px;top:976px;width:115px;height:46px;background:#e1e9f7;"></div>
<div class="t" style="left:185.00px;top:991.26px;font-size:18px;color:#0b57d0;letter-spacing:0.4px;-webkit-text-stroke-width:0.55px;">Sheet1</div>
<svg class="r" style="left:259px;top:997px;" width="12" height="7" viewBox="0 0 12 7"><path d="M1 .8h10L6 5.8z" fill="#0b57d0"/></svg>
<svg class="r" style="left:1877px;top:994px;" width="14" height="16" viewBox="0 0 14 16"><path d="M10 2L4 8l6 6" fill="none" stroke="#444746" stroke-width="2"/></svg>
<svg class="r" style="left:0;top:0;font-family:'Liberation Sans',sans-serif" width="1920" height="1022"><rect x="370" y="336" width="761" height="470" fill="#ffffff"/><rect x="473" y="406" width="635" height="1" fill="#cccccc"/><rect x="473" y="469" width="635" height="1" fill="#cccccc"/><rect x="473" y="532" width="635" height="1" fill="#cccccc"/><rect x="473" y="595" width="635" height="1" fill="#cccccc"/><rect x="473" y="658" width="635" height="1" fill="#cccccc"/><rect x="473" y="720.8" width="635" height="1.6" fill="#333333"/><text x="464.8" y="411.7" font-size="15" text-anchor="end" fill="#222222">2500</text><text x="464.8" y="474.7" font-size="15" text-anchor="end" fill="#222222">2000</text><text x="464.8" y="537.7" font-size="15" text-anchor="end" fill="#222222">1500</text><text x="464.8" y="600.7" font-size="15" text-anchor="end" fill="#222222">1000</text><text x="464.8" y="663.7" font-size="15" text-anchor="end" fill="#222222">500</text><text x="464.8" y="726.7" font-size="15" text-anchor="end" fill="#222222">0</text><text x="499.5" y="741.3" font-size="15" text-anchor="middle" fill="#222222">Jan</text><text x="552.4" y="741.3" font-size="15" text-anchor="middle" fill="#222222">Feb</text><text x="605.3" y="741.3" font-size="15" text-anchor="middle" fill="#222222">Mar</text><text x="658.3" y="741.3" font-size="15" text-anchor="middle" fill="#222222">Apr</text><text x="711.2" y="741.3" font-size="15" text-anchor="middle" fill="#222222">May</text><text x="764.1" y="741.3" font-size="15" text-anchor="middle" fill="#222222">Jun</text><text x="817.0" y="741.3" font-size="15" text-anchor="middle" fill="#222222">Jul</text><text x="869.9" y="741.3" font-size="15" text-anchor="middle" fill="#222222">Aug</text><text x="922.9" y="741.3" font-size="15" text-anchor="middle" fill="#222222">Sep</text><text x="975.8" y="741.3" font-size="15" text-anchor="middle" fill="#222222">Oct</text><text x="1028.7" y="741.3" font-size="15" text-anchor="middle" fill="#222222">Nov</text><text x="1081.6" y="741.3" font-size="15" text-anchor="middle" fill="#222222">Dec</text><text x="790" y="779.7" font-size="15" text-anchor="middle" fill="#222222">Month</text><text transform="translate(405.6 571.6) rotate(-90)" x="0" y="0" font-size="15" text-anchor="middle" fill="#222222">Conversions</text><text x="392.5" y="378.8" font-size="25.4" fill="#757575">Conversions vs. Month</text><polyline points="499.5,595.5 552.4,582.9 605.3,570.3 658.3,557.7 711.2,545.1 764.1,532.5 817.0,469.5 869.9,456.9 922.9,444.3 975.8,431.7 1028.7,419.1 1081.6,406.5" fill="none" stroke="#4a7fdb" stroke-width="2.6" stroke-linejoin="round"/><circle cx="1113.6" cy="347.8" r="2.4" fill="#666666"/><circle cx="1113.6" cy="355.4" r="2.4" fill="#666666"/><circle cx="1113.6" cy="363.1" r="2.4" fill="#666666"/><rect x="369" y="334.3" width="763" height="1.8" fill="#4f73a8"/><rect x="369" y="805.2" width="763" height="1.8" fill="#4f73a8"/><rect x="368.5" y="335" width="2.2" height="471" fill="#6485b0"/><rect x="1130.3" y="335" width="2.2" height="471" fill="#5a80b8"/><rect x="365.00" y="330.70" width="9" height="9" fill="#2a78e0"/><rect x="365.00" y="566.10" width="9" height="9" fill="#2a78e0"/><rect x="365.00" y="801.70" width="9" height="9" fill="#2a78e0"/><rect x="745.95" y="330.70" width="9" height="9" fill="#2a78e0"/><rect x="745.95" y="801.70" width="9" height="9" fill="#2a78e0"/><rect x="1126.90" y="330.70" width="9" height="9" fill="#2a78e0"/><rect x="1126.90" y="566.10" width="9" height="9" fill="#2a78e0"/><rect x="1126.90" y="801.70" width="9" height="9" fill="#2a78e0"/><path d="M352 309H1154V830H352Z M360 317V822H1146V317Z" fill="#1e1bcc" fill-rule="evenodd"/></svg>
<svg class="r" style="left:1270px;top:263.3px;" width="16" height="24" viewBox="0 0 16 24"><path d="M2.8 2.6V15.8L6.1 12.8 8.8 19.6 11.3 18.6 8.5 12.1H12.2Z" fill="#000" stroke="#fff" stroke-width="0.9" stroke-linejoin="round"/></svg>
<div class="r" style="left:1493px;top:82px;width:407px;height:893px;background:#ffffff;border-radius:16px;"></div>
<svg class="r" style="left:1515px;top:105px;" width="28" height="27" viewBox="0 0 28 27"><rect x="2.8" y="2.8" width="21.5" height="20.5" rx="2" fill="none" stroke="#1e8e3e" stroke-width="2.1"/><path d="M8.2 17.5v-7.5M13.5 17.5V6.5M18.8 17.5v-3.8" stroke="#1e8e3e" stroke-width="1.9"/></svg>
<div class="t" style="left:1560.00px;top:107.38px;font-size:22px;color:#1f1f1f;">Chart editor</div>
<svg class="r" style="left:1855px;top:110px;" width="19" height="19" viewBox="0 0 19 19"><path d="M3 3l13 13M16 3L3 16" stroke="#444746" stroke-width="2"/></svg>
<div class="r" style="left:1493px;top:153.5px;width:407px;height:1.3px;background:#dadce0;"></div>
<div class="t" style="left:1559.50px;top:176.06px;font-size:18px;color:#188038;letter-spacing:0.5px;-webkit-text-stroke-width:0.55px;">Setup</div>
<div class="r" style="left:1549px;top:202.3px;width:72px;height:3.6px;background:#188038;border-radius:3px 3px 0 0;"></div>
<div class="t" style="left:1742.50px;top:176.06px;font-size:18px;color:#5f6368;letter-spacing:0.55px;-webkit-text-stroke-width:0.55px;">Customize</div>
<div class="r" style="left:1885px;top:215px;width:9.5px;height:718px;background:#dadce0;border-radius:5px;"></div>
<div class="t" style="left:1514.00px;top:234.30px;font-size:15px;color:#5f6368;">Chart type</div>
<div class="r" style="left:1514px;top:262px;width:345px;height:53px;background:#ffffff;border:1.2px solid #dadce0;border-radius:5px;box-sizing:border-box;"></div>
<svg class="r" style="left:1523px;top:274px;" width="27" height="25" viewBox="0 0 27 25"><path d="M2.5 1.4V22.3H25" fill="none" stroke="#666" stroke-width="1.4"/><path d="M2.6 16.9L10.7 11.3 16.1 15.3 23.7 9.9" fill="none" stroke="#666" stroke-width="1.7"/></svg>
<div class="t" style="left:1560.50px;top:279.16px;font-size:18px;color:#1f1f1f;">Line chart</div>
<svg class="r" style="left:1829px;top:283px;" width="14" height="10" viewBox="0 0 14 10"><path d="M1.5 2h11L7 8.3z" fill="#444746"/></svg>
<div class="t" style="left:1514.00px;top:341.50px;font-size:15px;color:#5f6368;">Data range</div>
<div class="t" style="left:1513.00px;top:381.87px;font-size:16.1px;color:#1f1f1f;">B1:B13,A1:A13</div>
<svg class="r" style="left:1826px;top:380px;" width="22" height="20" viewBox="0 0 22 20"><rect x="1.8" y="2.3" width="18" height="16" fill="none" stroke="#5f6368" stroke-width="2.2"/><path d="M10.8 2.3v16M1.8 10.3h18" stroke="#5f6368" stroke-width="2"/></svg>
<div class="r" style="left:1514px;top:411.2px;width:345px;height:1.5px;background:#dadce0;"></div>
<div class="t" style="left:1514.00px;top:439.20px;font-size:15px;color:#5f6368;">Combine ranges</div>
<div class="r" style="left:1514px;top:466.5px;width:345px;height:52px;background:#ffffff;border:1.2px solid #dadce0;border-radius:5px;box-sizing:border-box;"></div>
<div class="t" style="left:1524.50px;top:483.06px;font-size:18px;color:#1f1f1f;">Horizontally</div>
<svg class="r" style="left:1828px;top:487px;" width="14" height="10" viewBox="0 0 14 10"><path d="M1.5 2h11L7 8.3z" fill="#444746"/></svg>
<div class="t" style="left:1513.50px;top:547.56px;font-size:18px;color:#1f1f1f;letter-spacing:0.5px;-webkit-text-stroke-width:0.35px;">X-axis</div>
<div class="r" style="left:1514px;top:580px;width:345px;height:45.5px;background:#f1f3f4;border-radius:23px;"></div>
<svg class="r" style="left:1530px;top:592px;" width="28" height="24" viewBox="0 0 28 24"><g fill="#55585c"><rect x="4.9" y="4.8" width="13" height="2.2"/><rect x="10" y="4.8" width="2.8" height="13.9"/><rect x="15.2" y="10.1" width="7.7" height="1.8"/><rect x="18" y="10.1" width="2.7" height="8.6"/></g></svg>
<div class="t" style="left:1576.00px;top:593.51px;font-size:18px;color:#3c4043;">Month</div>
<svg class="r" style="left:1825px;top:591px;" width="10" height="22" viewBox="0 0 10 22"><circle cx="5" cy="3.5" r="1.95" fill="#74787c"/><circle cx="5" cy="11" r="1.95" fill="#74787c"/><circle cx="5" cy="18.5" r="1.95" fill="#74787c"/></svg>
<div class="r" style="left:1515px;top:650.5px;width:23px;height:22.5px;background:transparent;border:2.2px solid #5f6368;border-radius:3px;box-sizing:border-box;"></div>
<div class="t" style="left:1554.50px;top:653.51px;font-size:18px;color:#3c4043;">Aggregate</div>
<div class="t" style="left:1513.50px;top:715.56px;font-size:18px;color:#1f1f1f;letter-spacing:0.3px;-webkit-text-stroke-width:0.35px;">Series</div>
<div class="r" style="left:1514px;top:748.3px;width:345px;height:44.5px;background:#f1f3f4;border-radius:23px;"></div>
<svg class="r" style="left:1530px;top:762px;" width="30" height="20" viewBox="0 0 30 20"><g fill="#55585c"><path d="M2.9 3.3h4.9v12.5H5.1V6H2.9z"/><path d="M9 3.3h5.6q2.7 0 2.7 2.7V11H11.6v2.3h5.7v2.5H9V8.5h5.6V5.8H9z"/><path d="M18.1 3.3h5.2q2.7 0 2.7 2.7v3.3q0 .8-.6 1.2.6.4.6 1.2v1.4q0 2.7-2.7 2.7h-5.2v-2.3h5.2V11h-2.8V9h2.8V5.8h-5.2z"/></g></svg>
<div class="t" style="left:1576.00px;top:761.80px;font-size:17.6px;color:#3c4043;">Conversions</div>
<svg class="r" style="left:1825px;top:758px;" width="10" height="22" viewBox="0 0 10 22"><circle cx="5" cy="3.5" r="1.95" fill="#74787c"/><circle cx="5" cy="11" r="1.95" fill="#74787c"/><circle cx="5" cy="18.5" r="1.95" fill="#74787c"/></svg>
<div class="r" style="left:1514px;top:804.2px;width:345px;height:45px;background:#ffffff;border:1.3px solid #dadce0;border-radius:23px;box-sizing:border-box;"></div>
<div class="t" style="left:1535.30px;top:818.23px;font-size:17.8px;color:#444746;letter-spacing:0px;-webkit-text-stroke-width:0.35px;">Add Series</div>
<div class="r" style="left:1515px;top:881px;width:23px;height:22.5px;background:transparent;border:2.2px solid #5f6368;border-radius:3px;box-sizing:border-box;"></div>
<div class="t" style="left:1554.50px;top:884.86px;font-size:18px;color:#3c4043;">Switch rows / columns</div>
<div class="r" style="left:1515px;top:919px;width:23px;height:23px;background:#188038;border-radius:3px;"></div>
<svg class="r" style="left:1515px;top:919px;" width="23" height="23" viewBox="0 0 23 23"><path d="M5 11.8l4.3 4.3 8.5-8.5" fill="none" stroke="#ffffff" stroke-width="2.6"/></svg>
<div class="t" style="left:1554.50px;top:922.76px;font-size:18px;color:#3c4043;letter-spacing:-0.3px;">Use row 1 as headers</div>
<div class="r" style="left:1515px;top:957px;width:23px;height:23px;background:#188038;border-radius:3px;"></div>
<svg class="r" style="left:1515px;top:957px;" width="23" height="23" viewBox="0 0 23 23"><path d="M5 11.8l4.3 4.3 8.5-8.5" fill="none" stroke="#ffffff" stroke-width="2.6"/></svg>
<div class="t" style="left:1554.50px;top:960.76px;font-size:18px;color:#3c4043;letter-spacing:-0.3px;">Use column B as labels</div>
<div class="r" style="left:1480px;top:975px;width:440px;height:47px;background:#f9fbfd;"></div>
<div class="r" style="left:1473px;top:975px;width:447px;height:1px;background:#dadce0;"></div>
<svg class="r" style="left:1877px;top:994px;" width="14" height="16" viewBox="0 0 14 16"><path d="M10 2L4 8l6 6" fill="none" stroke="#444746" stroke-width="2"/></svg>
</body></html>
